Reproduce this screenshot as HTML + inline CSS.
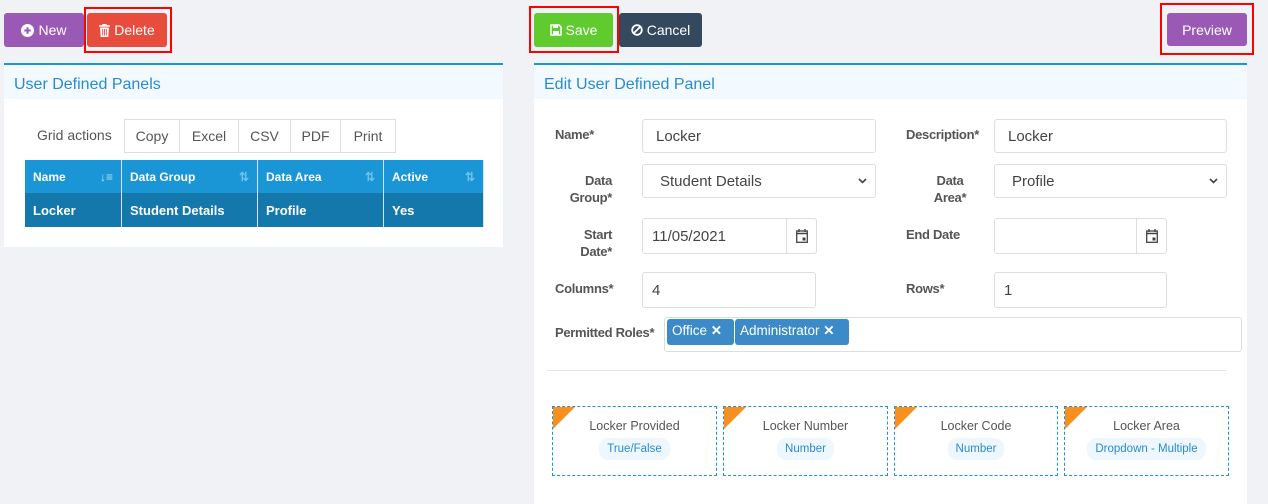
<!DOCTYPE html>
<html><head><meta charset="utf-8"><style>
*{box-sizing:border-box;margin:0;padding:0}
body{width:1268px;height:504px;background:#f1f2f6;font-family:"Liberation Sans",sans-serif;position:relative;overflow:hidden;font-size:14px;color:#555}
.a{position:absolute}
.btn{position:absolute;color:#fff;font-size:14px;display:flex;align-items:center;justify-content:center;border-radius:3px;gap:4px;white-space:nowrap}
.btn svg{flex:none}
.ol{position:absolute;border:2px solid #f00}
.ph{position:absolute;background:#f3faff;border-top:2px solid #1a96d6;height:36px;color:#2a8ad0;font-size:16px;padding:11px 10px 0}
.wb{position:absolute;background:#fff}
.inp{position:absolute;border:1px solid #ddd;border-radius:3px;background:#fff;font-size:15px;color:#444;padding-left:13px;display:flex;align-items:center}
.lbl{position:absolute;font-size:13px;color:#555;line-height:17px;font-weight:bold;letter-spacing:-0.3px}
.ga{position:absolute;top:119px;height:34px;border:1px solid #ddd;background:#fff;display:flex;align-items:center;justify-content:center;font-size:14px;color:#555}
.th,.td{position:absolute;color:#fff;font-size:12px;font-weight:bold;padding-left:8px;display:flex;align-items:center;border-right:1px solid #cfe5f3}
.th{top:160px;height:33px;background:#1a96d6}
.td{top:193px;height:34px;background:#1478ad;font-size:13px}
.sic{position:absolute;right:8px;color:#6cc0ec;font-size:12px}
.card{position:absolute;top:406px;height:70px;border:1px dashed #1a96d6;text-align:center}
.card .tri{position:absolute;left:0;top:0;width:0;height:0;border-top:22px solid #f7901e;border-right:22px solid transparent}
.card .t{margin-top:12px;font-size:12.5px;color:#555}
.card .p{display:inline-block;margin-top:5px;background:#eef7fd;color:#2a8ad0;font-size:11.5px;padding:5px 8px;border-radius:9px}
.cal{position:absolute;top:0;right:0;width:30px;height:100%;border-left:1px solid #ddd;display:flex;align-items:center;justify-content:center}
.tag{position:absolute;top:319px;height:26px;background:#3d8ac8;color:#fff;border-radius:3px;font-size:13.5px;padding:4px 5px;white-space:nowrap}
</style></head><body>
<div class="btn" style="left:4px;top:13px;width:80px;height:34px;background:#9b59b6"><svg width="13" height="13" viewBox="0 0 14 14"><circle cx="7" cy="7" r="7" fill="#fff"/><path d="M7 3.5v7M3.5 7h7" stroke="#9b59b6" stroke-width="2.2"/></svg>New</div>
<div class="ol" style="left:84px;top:7px;width:88px;height:46px"></div>
<div class="btn" style="left:87px;top:13px;width:80px;height:34px;background:#e74c3c"><svg width="11" height="13" viewBox="0 0 11 13"><path d="M0 2h11M4 2V0.6h3V2" stroke="#fff" stroke-width="1.4" fill="none"/><path d="M1 3.5h9l-0.7 9.5H1.7z" fill="#fff"/><path d="M3.7 5v6.5M5.5 5v6.5M7.3 5v6.5" stroke="#e74c3c" stroke-width="0.9"/></svg>Delete</div>
<div class="ol" style="left:529px;top:6px;width:90px;height:47px"></div>
<div class="btn" style="left:534px;top:13px;width:79px;height:34px;background:#5fcb2e"><svg width="12" height="12" viewBox="0 0 12 12"><path d="M1 1h8l2 2v8H1z" fill="none" stroke="#fff" stroke-width="1.5"/><rect x="3" y="1" width="5" height="3" fill="#fff"/><rect x="3" y="7" width="6" height="4" fill="#fff"/></svg>Save</div>
<div class="btn" style="left:619px;top:13px;width:83px;height:34px;background:#34495e"><svg width="12" height="12" viewBox="0 0 12 12"><circle cx="6" cy="6" r="4.8" fill="none" stroke="#fff" stroke-width="1.8"/><path d="M2.6 9.4L9.4 2.6" stroke="#fff" stroke-width="1.8"/></svg>Cancel</div>
<div class="ol" style="left:1160px;top:3px;width:94px;height:52px"></div>
<div class="btn" style="left:1167px;top:13px;width:80px;height:33px;background:#9b59b6">Preview</div>

<div class="ph" style="left:4px;top:63px;width:499px">User Defined Panels</div>
<div class="wb" style="left:4px;top:99px;width:499px;height:148px"></div>
<div class="a" style="left:37px;top:127px;font-size:14px;color:#555">Grid actions</div>
<div class="ga" style="left:124px;width:56px">Copy</div>
<div class="ga" style="left:179px;width:60px">Excel</div>
<div class="ga" style="left:238px;width:53px">CSV</div>
<div class="ga" style="left:290px;width:51px">PDF</div>
<div class="ga" style="left:340px;width:56px">Print</div>
<div class="th" style="left:25px;width:97px">Name<span class="sic" style="color:#b9def3">↓≡</span></div>
<div class="th" style="left:122px;width:136px">Data Group<span class="sic">⇅</span></div>
<div class="th" style="left:258px;width:126px">Data Area<span class="sic">⇅</span></div>
<div class="th" style="left:384px;width:100px">Active<span class="sic">⇅</span></div>
<div class="td" style="left:25px;width:97px">Locker</div>
<div class="td" style="left:122px;width:136px">Student Details</div>
<div class="td" style="left:258px;width:126px">Profile</div>
<div class="td" style="left:384px;width:100px">Yes</div>

<div class="ph" style="left:534px;top:63px;width:713px">Edit User Defined Panel</div>
<div class="wb" style="left:534px;top:99px;width:713px;height:405px"></div>
<div class="lbl" style="left:555px;top:126px">Name*</div>
<div class="inp" style="left:642px;top:119px;width:234px;height:34px">Locker</div>
<div class="lbl" style="left:906px;top:126px">Description*</div>
<div class="inp" style="left:994px;top:119px;width:233px;height:34px">Locker</div>
<div class="lbl" style="left:560px;top:172px;width:52px;text-align:right">Data<br>Group*</div>
<div class="inp" style="left:642px;top:164px;width:234px;height:34px;padding-left:17px">Student Details<svg style="position:absolute;right:8px" width="9" height="6" viewBox="0 0 9 6"><path d="M1 1l3.5 3.5L8 1" stroke="#444" stroke-width="1.6" fill="none"/></svg></div>
<div class="lbl" style="left:925px;top:172px;width:50px;text-align:center">Data<br>Area*</div>
<div class="inp" style="left:994px;top:164px;width:233px;height:34px;padding-left:17px">Profile<svg style="position:absolute;right:8px" width="9" height="6" viewBox="0 0 9 6"><path d="M1 1l3.5 3.5L8 1" stroke="#444" stroke-width="1.6" fill="none"/></svg></div>
<div class="lbl" style="left:560px;top:226px;width:52px;text-align:right">Start<br>Date*</div>
<div class="inp" style="left:642px;top:218px;width:175px;height:36px;padding-left:9px">11/05/2021<div class="cal"><svg width="12" height="14" viewBox="0 0 12 14"><rect x="0.7" y="2" width="10.6" height="11.3" fill="none" stroke="#444" stroke-width="1.3"/><path d="M0.7 4.5h10.6M3 0v3M9 0v3" stroke="#444" stroke-width="1.4"/><rect x="6.5" y="8.5" width="3" height="3" fill="#444"/></svg></div></div>
<div class="lbl" style="left:906px;top:226px">End Date</div>
<div class="inp" style="left:994px;top:218px;width:173px;height:36px"><div class="cal"><svg width="12" height="14" viewBox="0 0 12 14"><rect x="0.7" y="2" width="10.6" height="11.3" fill="none" stroke="#444" stroke-width="1.3"/><path d="M0.7 4.5h10.6M3 0v3M9 0v3" stroke="#444" stroke-width="1.4"/><rect x="6.5" y="8.5" width="3" height="3" fill="#444"/></svg></div></div>
<div class="lbl" style="left:555px;top:280px">Columns*</div>
<div class="inp" style="left:642px;top:272px;width:174px;height:36px;padding-left:9px">4</div>
<div class="lbl" style="left:906px;top:280px">Rows*</div>
<div class="inp" style="left:994px;top:272px;width:173px;height:36px;padding-left:9px">1</div>
<div class="lbl" style="left:555px;top:324px">Permitted Roles*</div>
<div class="inp" style="left:664px;top:317px;width:578px;height:35px"></div>
<div class="tag" style="left:667px;width:67px">Office <b>✕</b></div>
<div class="tag" style="left:735px;width:114px">Administrator <b>✕</b></div>
<div class="a" style="left:547px;top:370px;width:680px;height:1px;background:#e5e5e5"></div>
<div class="card" style="left:552px;width:165px"><div class="tri"></div><div class="t">Locker Provided</div><div class="p">True/False</div></div>
<div class="card" style="left:723px;width:165px"><div class="tri"></div><div class="t">Locker Number</div><div class="p">Number</div></div>
<div class="card" style="left:894px;width:164px"><div class="tri"></div><div class="t">Locker Code</div><div class="p">Number</div></div>
<div class="card" style="left:1064px;width:165px"><div class="tri"></div><div class="t">Locker Area</div><div class="p">Dropdown - Multiple</div></div>
</body></html>
